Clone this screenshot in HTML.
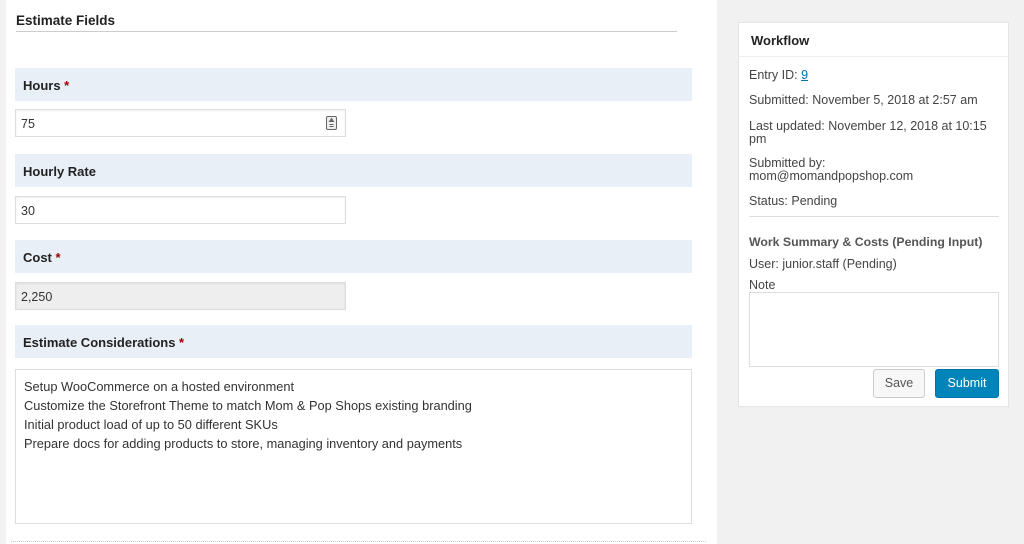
<!DOCTYPE html>
<html><head><style>
*{margin:0;padding:0;box-sizing:border-box}
body{width:1024px;height:544px;background:#f1f1f1;font-family:"Liberation Sans",sans-serif;color:#444;position:relative;overflow:hidden;font-size:13px}
.a{position:absolute}
.main{left:6px;top:0;width:711px;height:544px;background:#fff}
.lab{background:#e9eff7;left:15px;width:677px;height:33px;font-weight:bold;color:#222;font-size:13px;padding:10px 0 0 8px}
.lab b{color:#900}
.inp{left:15px;width:331px;height:28px;border:1px solid #ddd;box-shadow:inset 0 1px 2px rgba(0,0,0,.07);padding:7px 5px;font-size:12.5px;color:#333;background:#fff}
.wf{left:738px;top:22px;width:271px;height:385px;background:#fff;border:1px solid #e5e5e5}
.wf p{position:absolute;left:10px;font-size:12.5px;color:#444;line-height:13px}
</style></head><body>
<div class="a main"></div>
<div class="a" style="left:16px;top:13px;font-weight:bold;font-size:13.5px;color:#222">Estimate Fields</div>
<div class="a" style="left:16px;top:31px;width:661px;height:1px;background:#ccc"></div>

<div class="a lab" style="top:68px">Hours <b>*</b></div>
<div class="a inp" style="top:109px">75
<svg class="a" style="left:310px;top:6px" width="11" height="14" viewBox="0 0 11 14"><rect x="0.5" y="0.5" width="10" height="13" rx="1.5" fill="#eee" stroke="#666"/><path d="M3.5 5.5L5.5 2.5 7.5 5.5ZM3.5 8.5h4M3.5 10.5h4" stroke="#666" fill="#666" stroke-width="1"/></svg></div>

<div class="a lab" style="top:154px">Hourly Rate</div>
<div class="a inp" style="top:196px">30</div>

<div class="a lab" style="top:240px">Cost <b>*</b></div>
<div class="a inp" style="top:282px;background:#eee">2,250</div>

<div class="a lab" style="top:325px">Estimate Considerations <b>*</b></div>
<div class="a" style="left:15px;top:369px;width:677px;height:155px;border:1px solid #ddd;padding:7px 8px;font-size:12.8px;color:#333;line-height:19px">Setup WooCommerce on a hosted environment<br>Customize the Storefront Theme to match Mom &amp; Pop Shops existing branding<br>Initial product load of up to 50 different SKUs<br>Prepare docs for adding products to store, managing inventory and payments</div>
<div class="a" style="left:11px;top:541px;width:695px;border-top:1px dotted #ccc"></div>

<div class="a wf">
<div class="a" style="left:0;top:0;width:269px;height:34px;border-bottom:1px solid #eee;padding:10px 12px;font-weight:bold;font-size:13px;color:#222">Workflow</div>
<p style="top:46px">Entry ID: <span style="color:#0073aa;text-decoration:underline">9</span></p>
<p style="top:71px">Submitted: November 5, 2018 at 2:57 am</p>
<p style="top:97px">Last updated: November 12, 2018 at 10:15<br>pm</p>
<p style="top:134px">Submitted by:<br>mom@momandpopshop.com</p>
<p style="top:172px">Status: Pending</p>
<div class="a" style="left:10px;top:193px;width:250px;height:1px;background:#ddd"></div>
<p style="top:213px;font-weight:bold;color:#555;font-size:12.3px">Work Summary &amp; Costs (Pending Input)</p>
<p style="top:235px">User: junior.staff (Pending)</p>
<p style="top:256px">Note</p>
<div class="a" style="left:10px;top:269px;width:250px;height:75px;border:1px solid #ddd"></div>
<div class="a" style="left:134px;top:346px;width:52px;height:29px;border:1px solid #ccc;background:#f7f7f7;border-radius:3px;text-align:center;line-height:27px;font-size:12.5px;color:#555">Save</div>
<div class="a" style="left:196px;top:346px;width:64px;height:29px;background:#0085ba;border:1px solid #0073aa;border-radius:3px;text-align:center;line-height:27px;font-size:12.5px;color:#fff">Submit</div>
</div>
</body></html>
